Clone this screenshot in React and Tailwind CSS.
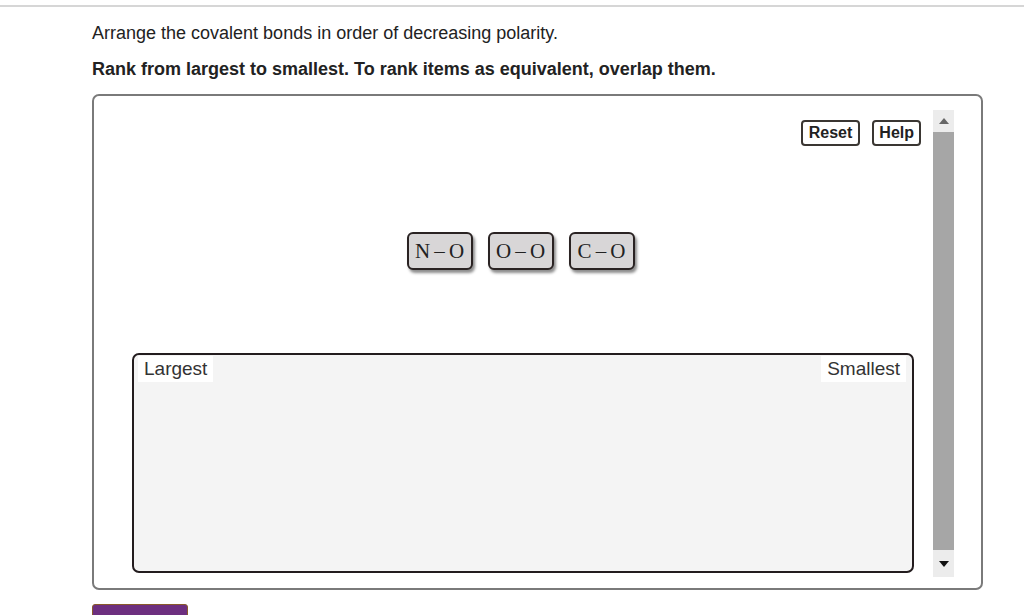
const chips = ['N\u2009–\u2009O', 'O\u2009–\u2009O', 'C\u2009–\u2009O']

function Chip({ label }) {
  return (
    <div className="w-[66px] h-[38px] rounded-[6px] border-2 border-[#2a2323] bg-[#d8d6d7] shadow-[2px_3px_3px_rgba(0,0,0,0.45)] flex items-center justify-center text-[21px] leading-none text-[#222]" style={{ fontFamily: '"Liberation Serif", "Times New Roman", serif' }}>
      {label}
    </div>
  )
}

export default function App() {
  return (
    <main className="w-[1024px] h-[615px] overflow-hidden bg-white text-[#222]" style={{ fontFamily: '"Liberation Sans", Arial, sans-serif' }}>
      <div className="mt-[5px] h-[2px] bg-[#d6d6d6]" />

      <div className="pl-[92px]">
        <p className="mt-[14px] text-[18px] leading-[24px] text-[#222]">
          Arrange the covalent bonds in order of decreasing polarity.
        </p>
        <p className="mt-[12px] text-[18px] leading-[24px] font-bold text-[#222]">
          Rank from largest to smallest. To rank items as equivalent, overlap them.
        </p>

        {/* Ranking panel */}
        <div className="mt-[13px] w-[891px] h-[496px] border-2 border-[#7a7a7a] rounded-[7px] flex">
          <div className="flex-1 pl-[38px] pr-[12px] pt-[24px] flex flex-col">
            <div className="flex justify-end gap-[12px]">
              <button className="h-[26px] px-[6px] border-2 border-[#3a3632] rounded-[4px] bg-white text-[16px] font-bold leading-none text-[#222]">Reset</button>
              <button className="h-[26px] px-[5px] border-2 border-[#3a3632] rounded-[4px] bg-white text-[16px] font-bold leading-none text-[#222]">Help</button>
            </div>

            <div className="mt-[86px] mr-[12px] flex justify-center gap-[15px]">
              {chips.map(c => <Chip key={c} label={c} />)}
            </div>

            <div className="mt-[83px] mr-[7px] h-[220px] border-2 border-[#231c1e] rounded-[7px] bg-[#f4f4f4] flex justify-between items-start pl-[4px] pr-[6px] pt-[1px]">
              <span className="bg-white px-[6px] h-[26px] leading-[26px] text-[19px] text-[#333]">Largest</span>
              <span className="bg-white px-[6px] h-[26px] leading-[26px] text-[19px] text-[#333]">Smallest</span>
            </div>
          </div>

          {/* Scrollbar */}
          <div className="mt-[14px] mr-[27px] w-[21px] h-[467px] bg-[#ececec] flex flex-col items-center">
            <div className="h-[22px] flex items-center justify-center">
              <svg width="10" height="6" viewBox="0 0 10 6"><path d="M0 6 L5 0 L10 6 Z" fill="#666" /></svg>
            </div>
            <div className="w-full flex-1 bg-[#a6a6a6]" />
            <div className="h-[27px] flex items-center justify-center">
              <svg width="10" height="6" viewBox="0 0 10 6"><path d="M0 0 L5 6 L10 0 Z" fill="#111" /></svg>
            </div>
          </div>
        </div>

        <div className="mt-[14px] w-[96px] h-[20px] rounded-t-[3px] bg-[#6d2f7f] border border-[#8a5a2a]" />
      </div>
    </main>
  )
}
